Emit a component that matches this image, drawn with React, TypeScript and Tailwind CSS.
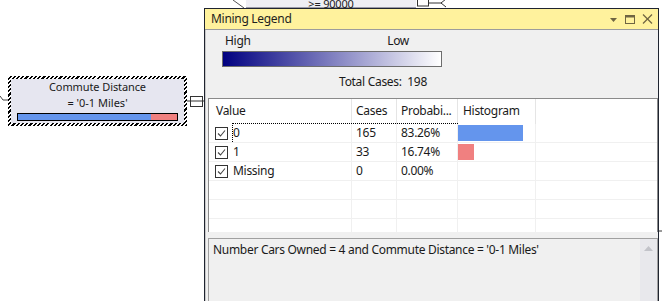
import React from 'react';

const font = { fontFamily: '"Noto Sans", "Open Sans", sans-serif' };

type Row = { v?: string; c?: string; p?: string; bar?: { w: number; color: string }; focus?: boolean };

const rows: Row[] = [
  { v: '0', c: '165', p: '83.26%', bar: { w: 65, color: '#6495ed' }, focus: true },
  { v: '1', c: '33', p: '16.74%', bar: { w: 16, color: '#f08080' } },
  { v: 'Missing', c: '0', p: '0.00%' },
  {},
  {},
  {},
];

function Check() {
  return (
    <svg width="13" height="13" viewBox="0 0 13 13" className="shrink-0">
      <rect x="0.5" y="0.5" width="12" height="12" fill="#fff" stroke="#333" />
      <polyline points="3,6.5 5.5,9 10,3.5" fill="none" stroke="#444" strokeWidth="1.1" />
    </svg>
  );
}

export default function App() {
  return (
    <div className="relative w-[662px] h-[301px] overflow-hidden bg-white text-[#1a1a1a]" style={font}>
      {/* top partial node */}
      <div className="absolute left-[246px] top-[-20px] w-[170px] h-[28px] bg-[#eeeef4] border-b border-[#9a9aa8] flex items-end justify-center">
        <span className="text-[11px] leading-[12px] mb-[-3px] text-[#222] tracking-[-0.2px]">&gt;= 90000</span>
      </div>
      <svg className="absolute left-[230px] top-0" width="16" height="10">
        <line x1="3" y1="0" x2="14" y2="8" stroke="#555" />
      </svg>
      <svg className="absolute left-[416px] top-0" width="34" height="9">
        <rect x="1.5" y="-3" width="11" height="9" fill="#fff" stroke="#333" />
        <line x1="13" y1="3" x2="26" y2="3" stroke="#333" />
        <polyline points="30,-1 25,3 30,7" fill="none" stroke="#333" />
      </svg>

      {/* left connector line */}
      <svg className="absolute left-0 top-[94px]" width="10" height="10">
        <polyline points="0,2 3,6 8,6" fill="none" stroke="#444" />
      </svg>

      {/* Commute Distance node */}
      <div className="absolute left-[8px] top-[76px] w-[179px] h-[50px] p-[3px] bg-[repeating-linear-gradient(-45deg,#000_0px,#000_1.5px,#fff_1.5px,#fff_3px)]">
        <div className="w-full h-full bg-[#e6e6f0] flex flex-col items-center pt-[1px]">
          <div className="text-[11px] leading-[14px] tracking-[-0.1px]">Commute Distance</div>
          <div className="text-[11px] leading-[14px] mt-[2px]">= '0-1 Miles'</div>
          <div className="mt-[3px] w-[161px] h-[8px] border border-black flex">
            <div className="h-full w-[133px] bg-[#6495ed]" />
            <div className="h-full flex-1 bg-[#f08080]" />
          </div>
        </div>
      </div>
      {/* connector square */}
      <svg className="absolute left-[187px] top-[95px]" width="18" height="13">
        <line x1="0" y1="6" x2="18" y2="6" stroke="#333" />
        <rect x="3.5" y="1.5" width="12" height="10" fill="none" stroke="#333" />
      </svg>
      {/* right edge connector */}
      <svg className="absolute left-[657px] top-[224px]" width="5" height="14">
        <line x1="1.5" y1="0" x2="1.5" y2="14" stroke="#333" />
        <line x1="1.5" y1="7" x2="5" y2="7" stroke="#333" />
      </svg>

      {/* Mining Legend window */}
      <div className="absolute left-[204px] top-[8px] w-[455px] h-[300px] border border-[#1f2430] flex flex-col bg-[#f0f0f0] tracking-[-0.3px]">
        <div className="h-[21px] shrink-0 bg-[#fff29d] border-b border-[#9c9c9c] flex items-center justify-between pl-[6px] pr-[5px]">
          <span className="text-[12px] leading-[16px] text-[#1e1e1e]">Mining Legend</span>
          <div className="flex items-center gap-[7px] text-[#6f6542]">
            <svg width="9" height="9" viewBox="0 0 9 9">
              <polygon points="1,3 8,3 4.5,7" fill="#6f6542" />
            </svg>
            <svg width="10" height="9" viewBox="0 0 10 9">
              <rect x="0.5" y="0.5" width="9" height="8" fill="none" stroke="#6f6542" />
              <rect x="0.5" y="0.5" width="9" height="2" fill="#6f6542" />
            </svg>
            <svg width="11" height="10" viewBox="0 0 11 10">
              <line x1="1" y1="0.5" x2="10" y2="9.5" stroke="#6f6542" strokeWidth="1.3" />
              <line x1="10" y1="0.5" x2="1" y2="9.5" stroke="#6f6542" strokeWidth="1.3" />
            </svg>
          </div>
        </div>

        <div className="flex-1 flex flex-col pl-[2px] border-l border-[#c8c8c8]">
          <div className="pl-[14px] pt-[3px]">
            <div className="w-[220px] flex justify-between pl-[3px] pr-[33px] text-[12px] leading-[16px]">
              <span>High</span>
              <span>Low</span>
            </div>
            <div className="mt-[2px] w-[220px] h-[16px] border border-[#6d6d6d] bg-[linear-gradient(to_right,#000080,#ffffff)]" />
            <div className="mt-[7px] w-[220px] pr-[15px] text-right text-[12px] leading-[16px]">
              Total Cases:&nbsp; 198
            </div>
          </div>

          {/* list view */}
          <div className="mt-[8px] h-[134px] shrink-0 bg-white border-t border-l border-r border-[#8a8a8a] overflow-hidden relative">
            <div className="flex h-[25px] text-[12px] leading-[16px]">
              <div className="w-[143px] border-r border-[#e5e5e5] pl-[7px] pt-[4px]">Value</div>
              <div className="w-[45px] border-r border-[#e5e5e5] pl-[4px] pt-[4px]">Cases</div>
              <div className="w-[61px] border-r border-[#e5e5e5] pl-[4px] pt-[4px]">Probabi...</div>
              <div className="w-[78px] border-r border-[#e5e5e5] pl-[5px] pt-[4px]">Histogram</div>
              <div className="flex-1" />
            </div>
            {rows.map((r, i) => (
              <div key={i} className="flex h-[19px] border-b border-[#f0f0f0] text-[12px] leading-[16px]">
                <div className="w-[143px] border-r border-[#f0f0f0] flex items-center pl-[6px]">
                  {r.v !== undefined && (
                    <>
                      <Check />
                      <span className="ml-[5px]">{r.v}</span>
                    </>
                  )}
                </div>
                <div className="w-[45px] border-r border-[#f0f0f0] flex items-center pl-[4px]">{r.c}</div>
                <div className="w-[61px] border-r border-[#f0f0f0] flex items-center pl-[4px]">{r.p}</div>
                <div className="w-[78px] border-r border-[#f0f0f0] pl-[0px] pt-[1px]">
                  {r.bar && <div className="h-[16px]" style={{ width: r.bar.w, backgroundColor: r.bar.color }} />}
                </div>
                <div className="flex-1" />
              </div>
            ))}
            <div className="absolute left-[23px] top-[24px] w-[226px] h-[19px] border-t border-l border-dotted border-black pointer-events-none" />
          </div>

          {/* text panel */}
          <div className="mt-[6px] flex-1 flex border-t border-l border-r border-[#a0a0a0] bg-[#f0f0f0]">
            <div className="flex-1 pl-[4px] pt-[3px] text-[12px] leading-[16px]">
              Number Cars Owned = 4 and Commute Distance = '0-1 Miles'
            </div>
            <div className="w-[17px] bg-[#e8e8ec] flex justify-center pt-[7px]">
              <svg width="9" height="5" viewBox="0 0 9 5">
                <polygon points="0,5 9,5 4.5,0" fill="#c2c3c9" />
              </svg>
            </div>
          </div>
        </div>
      </div>
    </div>
  );
}
